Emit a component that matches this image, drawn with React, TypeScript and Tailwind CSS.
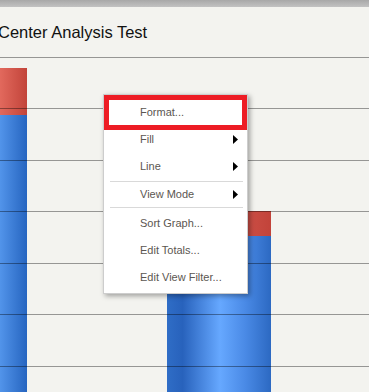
import React from "react";

const font = { fontFamily: '"Liberation Sans", Arial, sans-serif' };

function Arrow() {
  return (
    <svg width="5" height="9" viewBox="0 0 5 9" className="block">
      <path d="M0 0 L5 4.5 L0 9 Z" fill="#000" />
    </svg>
  );
}

function Item({ label, h, arrow }: { label: string; h: string; arrow?: boolean }) {
  return (
    <div className={`flex items-center justify-between pl-[36px] pr-[9px] ${h}`}>
      <span className="text-[11px] text-[#5b5651]">{label}</span>
      {arrow ? <Arrow /> : null}
    </div>
  );
}

function Sep() {
  return (
    <div className="h-[3px] pt-[1px] pl-[6px] pr-[4px]">
      <div className="h-px bg-[#d9d9d9]" />
    </div>
  );
}

export default function App() {
  return (
    <div className="relative w-[369px] h-[392px] overflow-hidden bg-[#f3f3ef] flex flex-col" style={font}>
      <div className="h-[7px] shrink-0 bg-gradient-to-b from-[#a8a8a8] to-[#c2c2c2]" />
      <div className="h-[50px] shrink-0 flex items-start pt-[15px] -ml-[2px]">
        <span className="text-[16.5px] leading-[20px] text-[#111]">Center Analysis Test</span>
      </div>
      <div className="relative flex-1">
        <div className="flex items-end h-full">
          <div className="w-[27px] h-[324px] flex flex-col shrink-0">
            <div className="h-[47px] bg-[linear-gradient(to_right,#e2695d,#c2443a)]" />
            <div className="flex-1 bg-[linear-gradient(to_right,#5294ea,#2665c0)]" />
          </div>
          <div className="ml-[140px] w-[104px] h-[181px] flex flex-col shrink-0">
            <div className="h-[25px] bg-[linear-gradient(to_right,#c8463d,#d65c52_50%,#c2433a)]" />
            <div className="flex-1 bg-[linear-gradient(to_right,#2f6dc6,#2862bc_15%,#66a8ff_51%,#4a8ae6_75%,#2c69c2)]" />
          </div>
        </div>
        <div className="absolute inset-0 flex flex-col pointer-events-none">
          <div className="h-[51px] border-t border-[rgba(0,0,0,0.38)]" />
          <div className="h-[52px] border-t border-[rgba(0,0,0,0.38)]" />
          <div className="h-[51px] border-t border-[rgba(0,0,0,0.38)]" />
          <div className="h-[52px] border-t border-[rgba(0,0,0,0.38)]" />
          <div className="h-[51px] border-t border-[rgba(0,0,0,0.38)]" />
          <div className="h-[52px] border-t border-[rgba(0,0,0,0.38)]" />
          <div className="h-[20px] border-t border-[rgba(0,0,0,0.38)]" />
        </div>
      </div>

      <div className="absolute left-[103px] top-[94px] w-[145px] h-[200px] bg-white border border-[#cdcdcd] shadow-[2px_2px_5px_rgba(0,0,0,0.35)] flex flex-col pt-[4px]">
        <Item label="Format..." h="h-[27px]" />
        <Item label="Fill" h="h-[27px]" arrow />
        <Item label="Line" h="h-[27px]" arrow />
        <Sep />
        <Item label="View Mode" h="h-[23px]" arrow />
        <Sep />
        <Item label="Sort Graph..." h="h-[28px]" />
        <Item label="Edit Totals..." h="h-[27px]" />
        <Item label="Edit View Filter..." h="h-[27px]" />
        <div className="absolute left-0 top-0 w-[143px] h-[35px] border-[5px] border-[#ed1c24]" />
      </div>
    </div>
  );
}
